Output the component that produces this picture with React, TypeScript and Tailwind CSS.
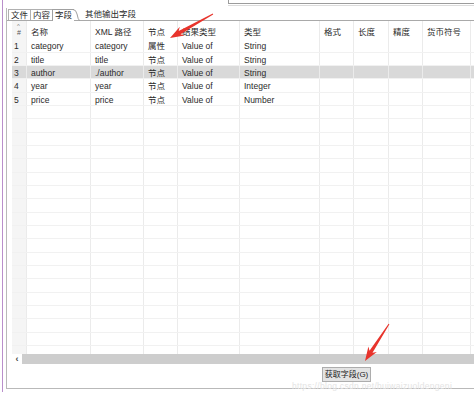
import React from 'react';

const cols = [
  { key: 'no', label: '#', w: 15 },
  { key: 'name', label: '名称', w: 64 },
  { key: 'path', label: 'XML 路径', w: 53 },
  { key: 'node', label: '节点', w: 34 },
  { key: 'result', label: '结果类型', w: 62 },
  { key: 'type', label: '类型', w: 80 },
  { key: 'format', label: '格式', w: 34 },
  { key: 'length', label: '长度', w: 35 },
  { key: 'precision', label: '精度', w: 34 },
  { key: 'currency', label: '货币符号', w: 48 },
];

const rows = [
  ['1', 'category', 'category', '属性', 'Value of', 'String'],
  ['2', 'title', 'title', '节点', 'Value of', 'String'],
  ['3', 'author', './author', '节点', 'Value of', 'String'],
  ['4', 'year', 'year', '节点', 'Value of', 'Integer'],
  ['5', 'price', 'price', '节点', 'Value of', 'Number'],
];

const emptyRows = Array.from({ length: 20 }, (_, i) => i);

function Arrows() {
  return (
    <svg className="absolute left-0 top-0 pointer-events-none" width="474" height="395">
      <polygon
        fill="#e8342c"
        points="213.2,14.4 180.5,34.2 184.6,35.6 170,38 179.8,26.8 178.7,31 212.8,13.6"
      />
      <polygon
        fill="#e8342c"
        points="389.4,324.3 372.5,352.8 376.8,352 365,361 368.4,346.6 369.5,350.8 388.6,323.7"
      />
    </svg>
  );
}

export default function App() {
  return (
    <div
      className="w-[474px] h-[395px] bg-white relative overflow-hidden flex text-[8.5px] text-[#2a2a2a] leading-none"
      style={{ fontFamily: '"Liberation Sans", "Noto Sans CJK SC", sans-serif' }}
    >
      {/* left gutter */}
      <div className="w-[6px] shrink-0">
        <div className="ml-[2px] w-px h-[392px] bg-[#b98fcb]" />
      </div>

      <div className="flex-1 flex flex-col">
        {/* top strip */}
        <div className="h-[8px] flex flex-col items-end">
          <div className="w-[246px] h-[4px] border-l border-b border-[#9c9c9c]" />
          <div className="w-[246px] h-px mt-px bg-[#dcdcdc]" />
        </div>

        {/* frame */}
        <div className="h-[381px] border-l border-b border-[#b9b9b9] flex flex-col">
          {/* tabs */}
          <div className="h-[13px] border-b border-[#a9a9a9] flex items-end pl-px">
            <div className="h-[11px] px-[2px] border-l border-t border-[#b0b0b0] flex items-center">文件</div>
            <div className="h-[11px] px-[2px] border-l border-t border-[#b0b0b0] flex items-center">内容</div>
            <div className="h-[12px] px-[2px] border-l border-t border-[#a0a0a0] bg-white flex items-center relative -mb-px">
              字段
              <svg className="absolute -right-[6px] top-[-1px]" width="7" height="13">
                <path d="M0 0.5 Q3 0.5 4 5 Q5 11 7 12" fill="none" stroke="#a0a0a0" strokeWidth="1" />
              </svg>
            </div>
            <div className="h-[11px] ml-[9px] px-[2px] flex items-center">其他输出字段</div>
          </div>

          <div className="flex-1 flex flex-col pl-[5px]">
            {/* table */}
            <div className="h-[333px] overflow-hidden">
              <div className="flex h-[18.5px]">
                {cols.map((c) => (
                  <div
                    key={c.key}
                    className={`shrink-0 border-r border-[#ebebeb] flex items-center ${
                      c.key === 'no' ? 'bg-[#f5f5f5] justify-center relative' : 'pl-[4px]'
                    }`}
                    style={{ width: c.w }}
                  >
                    {c.key === 'no' ? (
                      <>
                        <span className="absolute top-[2px] left-[5px] text-[6px] text-[#777]">^</span>
                        <span className="mt-[4px] text-[7px] text-[#555]">#</span>
                      </>
                    ) : (
                      <span className="mt-[3px]">{c.label}</span>
                    )}
                  </div>
                ))}
              </div>

              {rows.map((r, i) => (
                <div
                  key={r[0]}
                  className={`flex h-[13.33px] border-b border-[#f1f1f1] ${i === 2 ? 'bg-[#d9d9d9]' : ''}`}
                >
                  {cols.map((c, j) => (
                    <div
                      key={c.key}
                      className={`shrink-0 border-r border-[#ebebeb] flex items-center pt-[2px] ${
                        j === 0 ? `pl-[2px] ${i === 2 ? '' : 'bg-[#f5f5f5]'}` : 'pl-[4px]'
                      }`}
                      style={{ width: c.w }}
                    >
                      {r[j] ?? ''}
                    </div>
                  ))}
                </div>
              ))}

              {emptyRows.map((k) => (
                <div key={k} className="flex h-[13.33px] border-b border-[#f1f1f1]">
                  {cols.map((c, j) => (
                    <div
                      key={c.key}
                      className={`shrink-0 border-r border-[#ebebeb] ${j === 0 ? 'bg-[#f5f5f5]' : ''}`}
                      style={{ width: c.w }}
                    />
                  ))}
                </div>
              ))}
            </div>

            {/* horizontal scrollbar */}
            <div className="h-[10px] flex">
              <div className="w-[10px] flex items-center justify-center text-[9px] font-bold text-[#444]">‹</div>
              <div className="flex-1 bg-[#cdcdcd]" />
            </div>

            {/* button row */}
            <div className="flex-1 pl-[310px] pt-[3px]">
              <div className="relative z-10 w-[49px] h-[15px] border border-[#adadad] bg-[#e3e3e3] flex items-center justify-center text-[8px] text-[#222]">
                获取字段(G)
              </div>
            </div>
          </div>
        </div>
      </div>

      <div className="absolute left-[292px] top-[382px] text-[8.5px] text-[#e4e4e4] tracking-[0.3px] pointer-events-none">
        https://blog.csdn.net/huiwaizuoldengeni
      </div>

      <Arrows />
    </div>
  );
}
